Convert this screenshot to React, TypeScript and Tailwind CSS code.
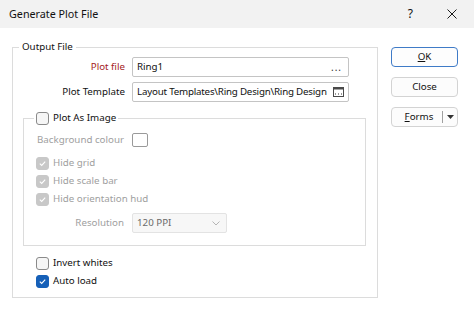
import React from "react";

type CS = "off" | "on" | "disabled";

function Check({ state }: { state: CS }) {
  if (state === "off") {
    return <span className="block w-[13px] h-[13px] rounded-[3px] border border-[#8a8a8a] bg-[#f6f6f6] shrink-0" />;
  }
  const bg = state === "on" ? "bg-[#1660b8] border-[#1660b8]" : "bg-[#c8c8c8] border-[#c8c8c8]";
  return (
    <span className={`flex items-center justify-center w-[13px] h-[13px] rounded-[3px] border shrink-0 ${bg}`}>
      <svg width="9" height="9" viewBox="0 0 9 9">
        <path d="M1.8 4.6 L3.7 6.4 L7.2 2.6" fill="none" stroke="white" strokeWidth="1.1" />
      </svg>
    </span>
  );
}

function CheckRow({ state, label, disabled }: { state: CS; label: string; disabled?: boolean }) {
  return (
    <div className="flex items-center h-[18px] gap-[4px]">
      <Check state={state} />
      <span className={disabled ? "text-[#a0a0a0]" : "text-[#111]"}>{label}</span>
    </div>
  );
}

export default function App() {
  return (
    <div className="w-[474px] h-[310px] bg-white font-['Noto_Sans',sans-serif] text-[9.75px] leading-[16px] text-[#111] flex flex-col overflow-hidden">
      <div className="h-[28px] bg-[#f2f2f2] flex items-center pl-[9px] pr-[17px] shrink-0 text-[10.75px]">
        <span className="flex-1">Generate Plot File</span>
        <span className="text-[12px] mr-[34px]">?</span>
        <svg width="10" height="10" viewBox="0 0 10 10">
          <path d="M0.5 0.5 L9.5 9.5 M9.5 0.5 L0.5 9.5" stroke="#1b1b1b" strokeWidth="1" />
        </svg>
      </div>
      <div className="flex pl-[12px] pt-[11px]">
        <fieldset className="w-[366px] border border-[#dcdcdc] pb-[7px]">
          <legend className="ml-[6px] px-[3px] leading-[16px]">Output File</legend>
          <div className="flex items-center mt-[2px]">
            <span className="w-[112px] text-right text-[#a51d1d] whitespace-nowrap">Plot file</span>
            <div className="ml-[7px] w-[217px] h-[20px] border border-[#c4c4c4] rounded-[2px] flex items-center pl-[4px] pr-[6px]">
              <span className="flex-1">Ring1</span>
              <span className="text-[10px] tracking-[1px] text-[#333]">...</span>
            </div>
          </div>
          <div className="flex items-center mt-[5px]">
            <span className="w-[112px] text-right whitespace-nowrap">Plot Template</span>
            <div className="ml-[7px] w-[217px] h-[20px] border border-[#c4c4c4] rounded-[2px] flex items-center pl-[4px] pr-[4px]">
              <span className="flex-1 whitespace-nowrap overflow-hidden tracking-[-0.2px]">Layout Templates\Ring Design\Ring Design</span>
              <svg width="11" height="10" viewBox="0 0 11 10" className="shrink-0 ml-[2px]">
                <rect x="0.5" y="0.5" width="10" height="9" fill="white" stroke="#4a4a4a" />
                <rect x="0.5" y="0.5" width="10" height="2" fill="#4a4a4a" />
                <rect x="2" y="6.5" width="1" height="1" fill="#333" />
                <rect x="5" y="6.5" width="1" height="1" fill="#333" />
                <rect x="8" y="6.5" width="1" height="1" fill="#333" />
              </svg>
            </div>
          </div>
          <fieldset className="ml-[10px] w-[343px] mt-[8px] border border-[#dcdcdc] pb-[12px]">
            <legend className="ml-[10px] px-[2px]">
              <div className="flex items-center gap-[4px] h-[16px]">
                <Check state="off" />
                <span>Plot As Image</span>
              </div>
            </legend>
            <div className="flex items-center mt-[6px] h-[16px]">
              <span className="w-[100px] text-right text-[#a0a0a0] whitespace-nowrap">Background colour</span>
              <span className="ml-[8px] w-[16px] h-[14px] border border-[#9a9a9a] rounded-[2px] bg-white" />
            </div>
            <div className="pl-[12px] mt-[6px]">
              <CheckRow state="disabled" label="Hide grid" disabled />
              <CheckRow state="disabled" label="Hide scale bar" disabled />
              <CheckRow state="disabled" label="Hide orientation hud" disabled />
            </div>
            <div className="flex items-center mt-[5px]">
              <span className="w-[100px] text-right text-[#a0a0a0] whitespace-nowrap">Resolution</span>
              <div className="ml-[8px] w-[95px] h-[20px] border border-[#e3e3e3] rounded-[2px] bg-[#f7f7f7] flex items-center pl-[4px] pr-[6px]">
                <span className="flex-1 text-[#6a6a6a]">120 PPI</span>
                <svg width="8" height="5" viewBox="0 0 8 5">
                  <path d="M0.5 0.5 L4 4 L7.5 0.5" fill="none" stroke="#b5b5b5" strokeWidth="1" />
                </svg>
              </div>
            </div>
          </fieldset>
          <div className="pl-[23px] mt-[8px]">
            <CheckRow state="off" label="Invert whites" />
            <CheckRow state="on" label="Auto load" />
          </div>
        </fieldset>
        <div className="ml-[13px] w-[67px] pt-[8px] flex flex-col gap-[10px]">
          <div className="h-[20px] rounded-[4px] border border-[#3f7bc7] bg-[#fdfdfd] flex items-center justify-center">
            <span><span className="underline">O</span>K</span>
          </div>
          <div className="h-[20px] rounded-[4px] border border-[#d3d3d3] bg-[#fcfcfc] flex items-center justify-center">
            <span>Close</span>
          </div>
          <div className="h-[20px] rounded-[4px] border border-[#d3d3d3] bg-[#fcfcfc] flex items-center">
            <span className="flex-1 text-center pl-[4px]"><span className="underline">F</span>orms</span>
            <span className="w-px h-[12px] bg-[#a0a0a0]" />
            <span className="w-[14px] flex justify-center">
              <svg width="7" height="4" viewBox="0 0 7 4">
                <path d="M0 0 L7 0 L3.5 4 Z" fill="#333" />
              </svg>
            </span>
          </div>
        </div>
      </div>
    </div>
  );
}
